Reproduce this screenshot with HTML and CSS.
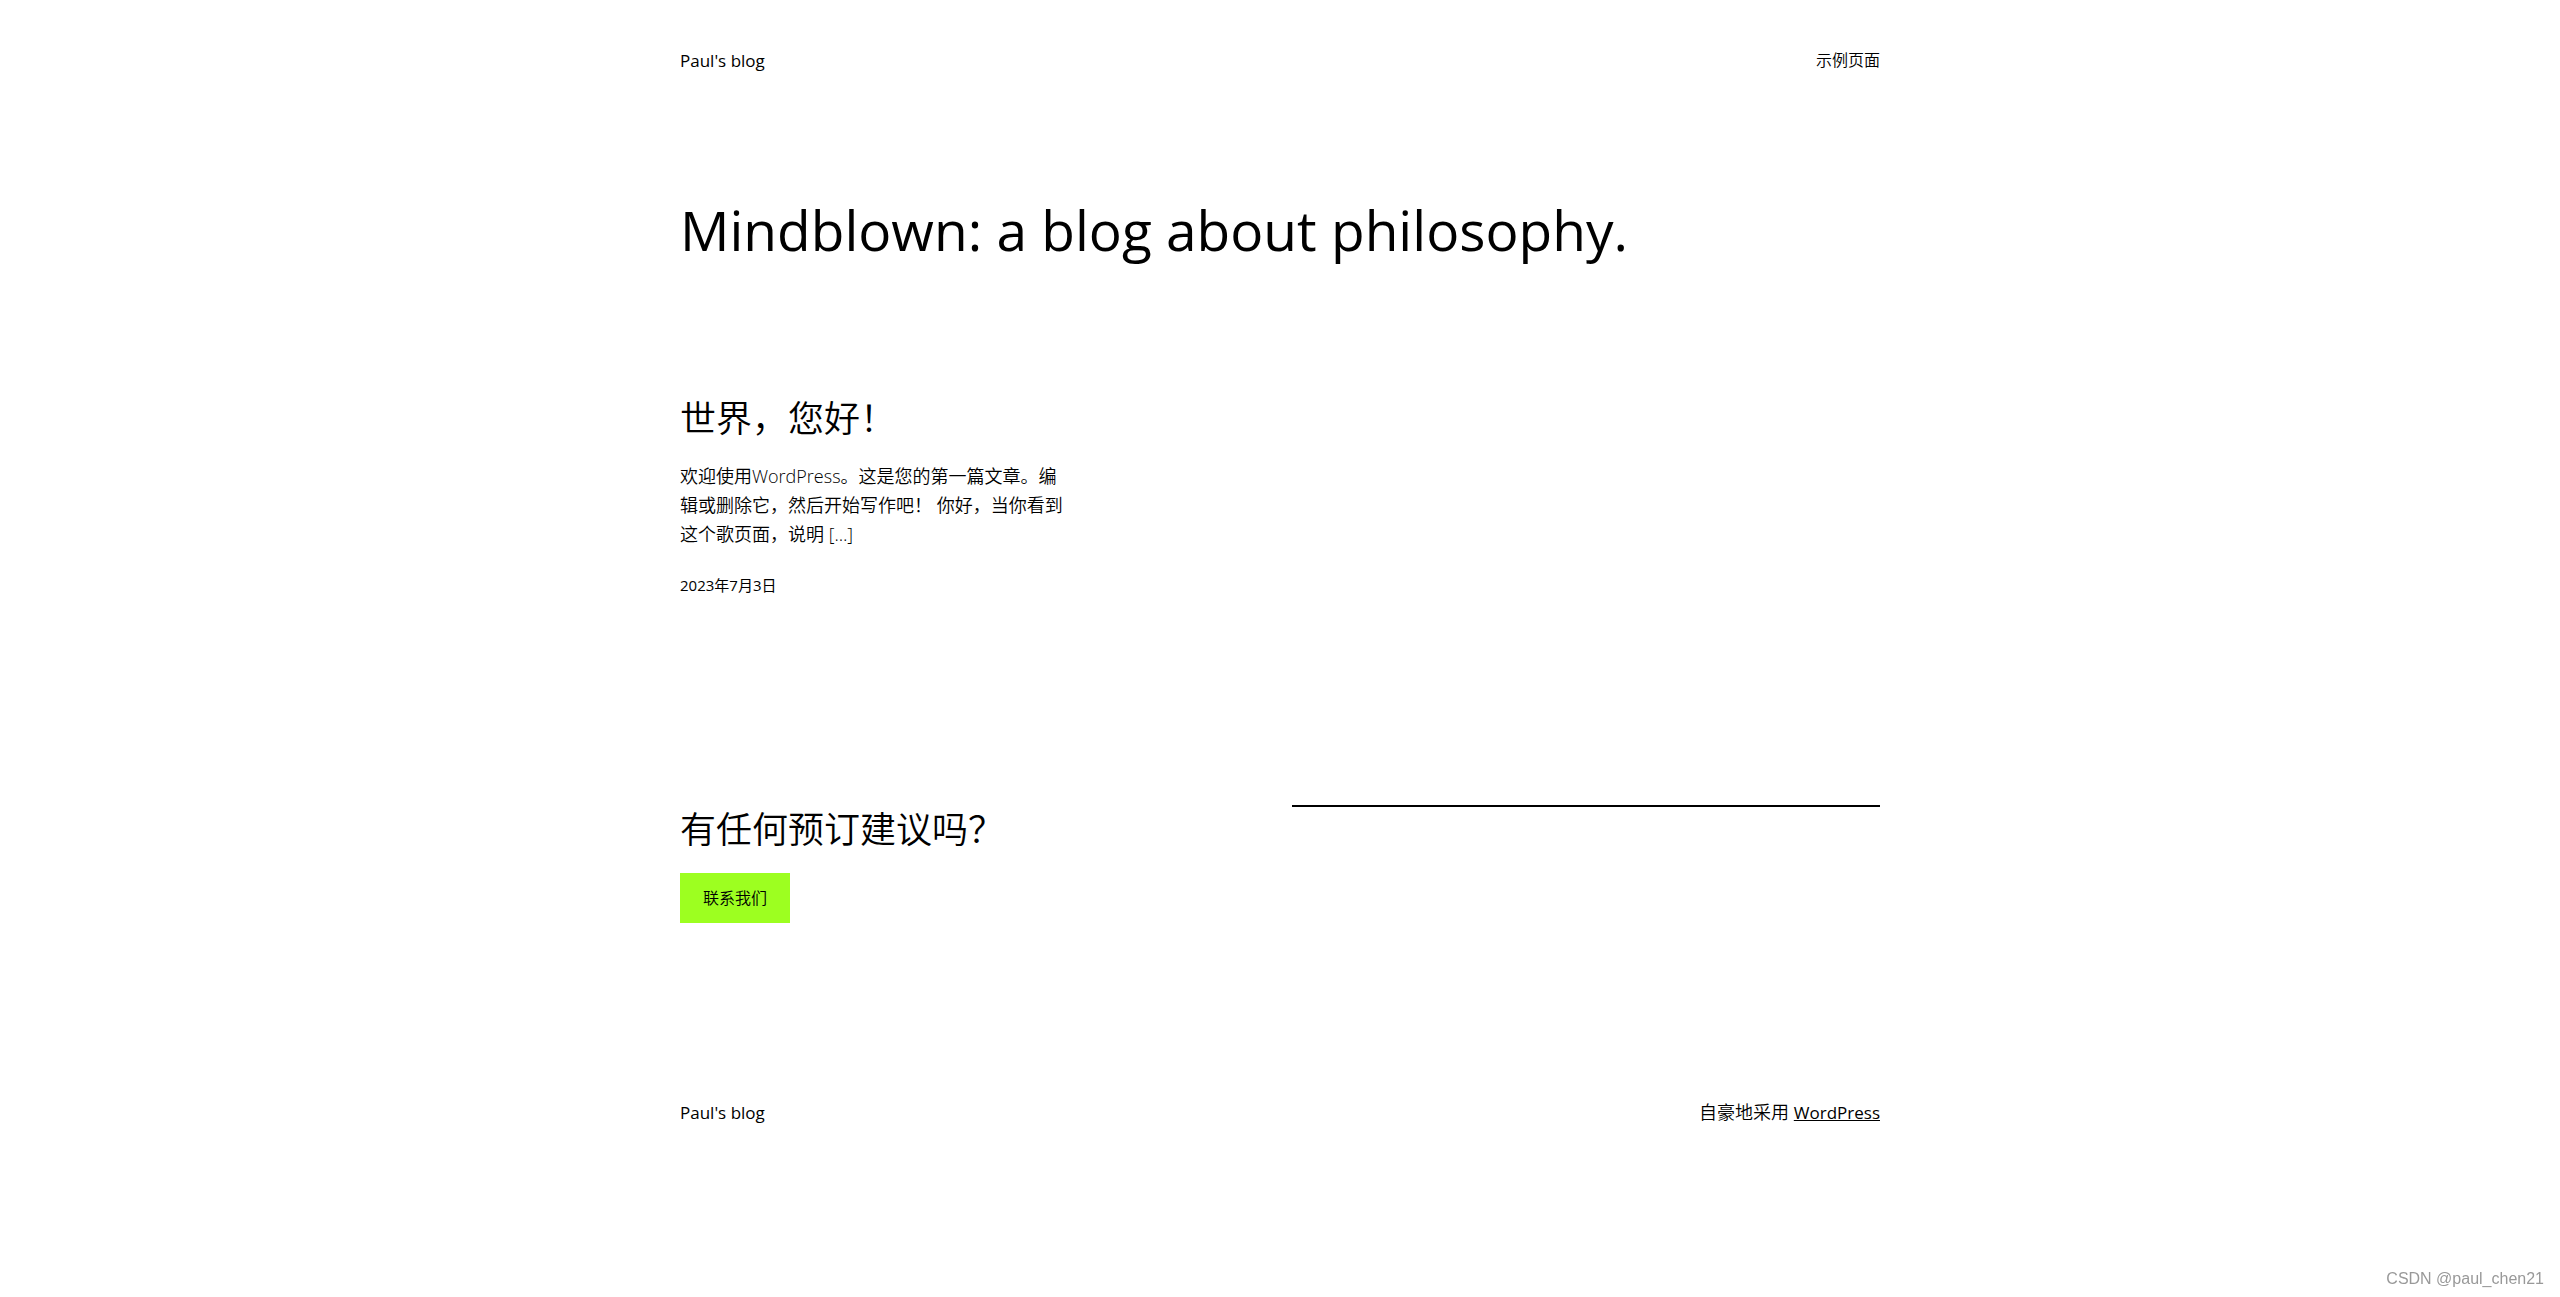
FILE: index.html
```
<!DOCTYPE html>
<html lang="zh-CN">
<head>
<meta charset="utf-8">
<meta name="viewport" content="width=device-width, initial-scale=1">
<title>Paul's blog</title>
<link rel="stylesheet" href="styles.css">
</head>
<body>
<div class="site">
  <header class="bar site-header">
    <a class="site-title" href="#">Paul's blog</a>
    <nav><a class="nav-link" href="#">示例页面</a></nav>
  </header>
  <main>
    <h1 class="page-title">Mindblown: a blog about philosophy.</h1>
    <div class="posts">
      <article class="post">
        <h2 class="heading"><a href="#">世界，您好！</a></h2>
        <p class="excerpt">欢迎使用WordPress。这是您的第一篇文章。编辑或删除它，然后开始写作吧！ 你好，当你看到这个歌页面，说明 […]</p>
        <a class="post-date" href="#"><time datetime="2023-07-03">2023年7月3日</time></a>
      </article>
    </div>
    <section class="contact">
      <div class="contact-text">
        <h2 class="heading">有任何预订建议吗？</h2>
        <button class="button" type="button">联系我们</button>
      </div>
      <hr class="rule">
    </section>
  </main>
  <footer class="bar site-footer">
    <a class="site-title" href="#">Paul's blog</a>
    <p class="credit">自豪地采用 <a class="credit-link" href="#">WordPress</a></p>
  </footer>
</div>
<div class="watermark">CSDN @paul_chen21</div>
</body>
</html>
```
FILE: styles.css
```
* {
  box-sizing: border-box;
}

body {
  margin: 0;
  background: #fff;
  color: #000;
  font-family: "Open Sans", "Noto Sans CJK SC", sans-serif;
  font-size: 18px;
  font-weight: 350;
  line-height: 29px;
}

h1, h2, p {
  margin: 0;
  font-weight: 350;
}

a {
  color: inherit;
  text-decoration: none;
}

.site {
  max-width: 1248px;
  margin: 0 auto;
  padding: 0 24px;
}

.bar {
  display: flex;
  align-items: center;
  justify-content: space-between;
}

.site-header {
  padding-top: 45px;
}

.site-title {
  font-size: 17px;
  font-weight: 400;
}

.nav-link {
  font-size: 16px;
}

.page-title {
  margin-top: 115px;
  font-size: 55px;
  font-weight: 400;
  line-height: 80px;
}

.posts {
  display: grid;
  grid-template-columns: repeat(auto-fill, minmax(300px, 1fr));
  gap: 24px;
  margin-top: 124px;
}

.post {
  display: flex;
  flex-direction: column;
}

.heading {
  font-size: 36px;
  line-height: 50px;
}

.excerpt {
  margin-top: 18px;
}

.post-date {
  margin-top: 22px;
  font-size: 15px;
  font-weight: 400;
}

.contact {
  display: grid;
  grid-template-columns: 1fr 1fr;
  gap: 24px;
  margin-top: 205px;
}

.contact-text {
  display: flex;
  flex-direction: column;
  align-items: flex-start;
  gap: 18px;
}

.button {
  padding: 12px 23px;
  border: 0;
  background: #9dff20;
  color: #000;
  font: inherit;
  font-size: 16px;
  line-height: 26px;
  cursor: pointer;
}

.rule {
  width: 100%;
  height: 2px;
  margin: 0;
  border: 0;
  background: #000;
}

.site-footer {
  margin-top: 175px;
  padding-bottom: 120px;
}

.credit-link {
  font-size: 17px;
  font-weight: 400;
  text-decoration: underline;
}

.watermark {
  position: fixed;
  right: 16px;
  bottom: 6px;
  color: #999;
  font-family: "Liberation Sans", sans-serif;
  font-size: 16px;
  font-weight: 400;
  line-height: 24px;
}
```
